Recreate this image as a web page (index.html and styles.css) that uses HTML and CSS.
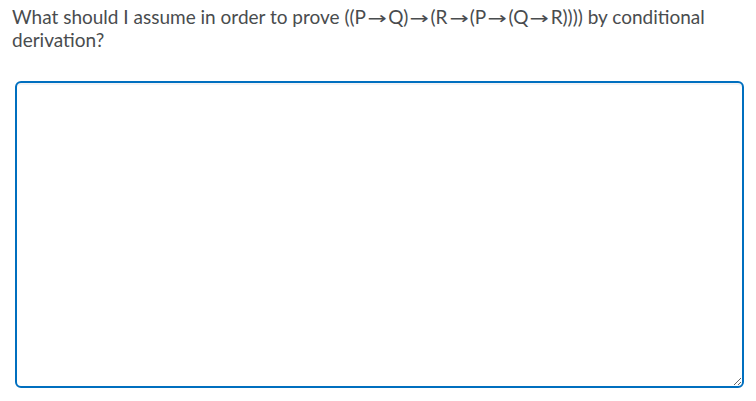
FILE: index.html
```html
<!DOCTYPE html>
<html>
<head>
<meta charset="utf-8">
<link rel="stylesheet" href="styles.css">
</head>
<body>
<div class="question">
  <p class="prompt">What should I assume in order to prove ((P<span class="arr">→</span>Q)<span class="arr">→</span>(R<span class="arr">→</span>(P<span class="arr">→</span>(Q<span class="arr">→</span>R)))) by conditional derivation?</p>
  <textarea class="answer"></textarea>
</div>
</body>
</html>
```
FILE: styles.css
```css
html, body {
  margin: 0;
  padding: 0;
  background: #ffffff;
}
.question {
  padding: 5px 12px 0 12px;
  font-family: Lato, "Noto Sans", sans-serif;
  color: #494c4e;
}
.prompt {
  margin: 0;
  font-size: 19px;
  line-height: 23px;
  max-width: 732px;
}
.arr {
  display: inline-block;
  font-family: "DejaVu Sans", sans-serif;
  font-size: 17px;
  line-height: 19px;
  margin: 0 4px;
  transform: scaleX(1.35);
}
.answer {
  display: block;
  box-sizing: border-box;
  margin: 30px 0 0 3px;
  width: 729px;
  height: 307px;
  border: 2px solid #006fbf;
  border-radius: 6px;
  box-shadow: inset 0 2px 0 0 #f2f3f5;
  outline: none;
  font-family: Lato, sans-serif;
  font-size: 16px;
  padding: 8px;
  background: #ffffff;
  resize: both;
}
```
